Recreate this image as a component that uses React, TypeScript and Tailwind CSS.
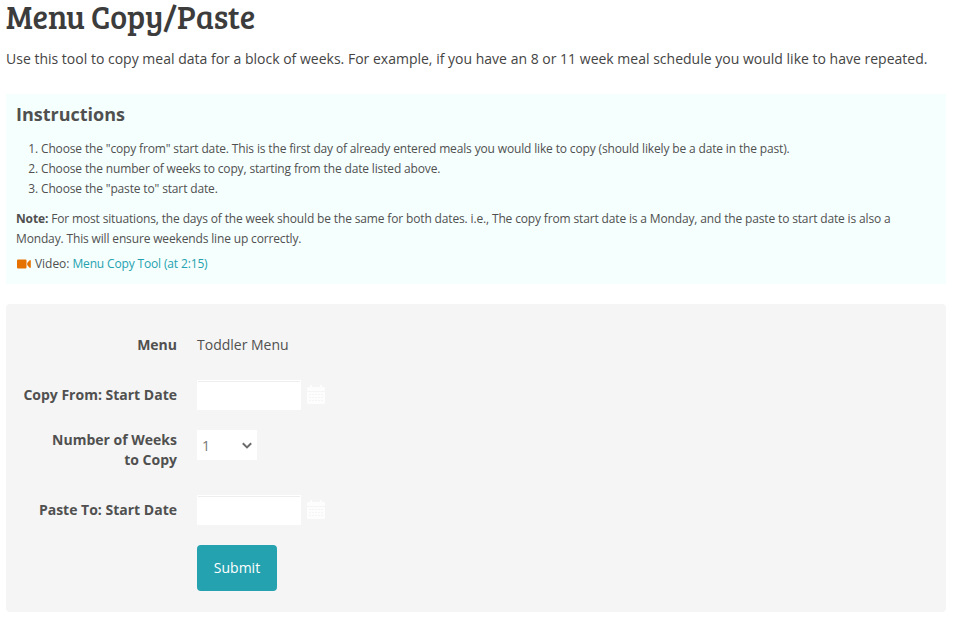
import { useState } from 'react'
import type { ReactNode } from 'react'

const steps = [
  'Choose the "copy from" start date. This is the first day of already entered meals you would like to copy (should likely be a date in the past).',
  'Choose the number of weeks to copy, starting from the date listed above.',
  'Choose the "paste to" start date.',
]

function VideoIcon() {
  return (
    <svg className="ml-px w-[14px] h-[10px] mr-1" viewBox="0 0 14 10" fill="#e57200">
      <rect x="0" y="0.5" width="9.5" height="9" rx="1" />
      <path d="M10.2 4 12.6 1.2h1.2v7.6h-1.2L10.2 6z" />
    </svg>
  )
}

function CalendarIcon() {
  return (
    <svg className="w-[18px] h-5" viewBox="0 0 18 20" fill="#fdfdfd">
      <path d="M0 3.2Q0 2 1.2 2H3V0h2v2h8V0h2v2h1.8Q18 2 18 3.2V6H0z" />
      <path
        fillRule="evenodd"
        d="M0 7h18v11q0 1-1 1H1q-1 0-1-1zM2 9v1h2V9zm3 0v1h2V9zm3 0v1h2V9zm3 0v1h2V9zm3 0v1h2V9zM2 12v1h2v-1zm3 0v1h2v-1zm3 0v1h2v-1zm3 0v1h2v-1zm3 0v1h2v-1zM2 15v1h2v-1zm3 0v1h2v-1zm3 0v1h2v-1zm3 0v1h2v-1zm3 0v1h2v-1z"
      />
    </svg>
  )
}

function Row({ label, className, children }: { label: ReactNode; className?: string; children: ReactNode }) {
  return (
    <div className={`flex gap-5 ${className ?? ''}`}>
      <div className="w-[171px] shrink-0 text-right font-bold">{label}</div>
      {children}
    </div>
  )
}

function DateField({ value, onChange }: { value: string; onChange: (v: string) => void }) {
  return (
    <div className="-mt-[5px] flex h-[30px] items-center gap-1.5">
      <input
        type="text"
        value={value}
        onChange={(e) => onChange(e.target.value)}
        className="w-[104px] h-[30px] px-1.5 bg-white border border-white shadow-[inset_0_1px_0_#eeeeee] outline-none"
      />
      <button type="button" aria-label="Pick a date" className="h-5">
        <CalendarIcon />
      </button>
    </div>
  )
}

export default function App() {
  const [from, setFrom] = useState('')
  const [weeks, setWeeks] = useState('1')
  const [to, setTo] = useState('')

  return (
    <div className="w-[955px] h-[620px] bg-white pl-1.5 pr-[9px] font-['Open_Sans',sans-serif] text-sm leading-5 text-[#505050]">
      <h1 className="h-[38px] whitespace-nowrap font-['Bree_Serif','DejaVu_Serif',serif] text-[32px] leading-[34px] tracking-[-0.1px] text-[#3c3c3c]">
        Menu Copy/Paste
      </h1>
      <p className="mt-[11px] whitespace-nowrap tracking-[0.007px] text-[#444444]">
        Use this tool to copy meal data for a block of weeks. For example, if you have an 8 or 11 week meal schedule you would like to have repeated.
      </p>

      {/* Instructions */}
      <section className="mt-[25px] h-[190px] bg-[#f5fffe] px-2.5 pt-2.5 text-xs leading-5 tracking-[-0.15px]">
        <h2 className="text-lg leading-5 font-bold tracking-normal">Instructions</h2>
        <ol className="mt-[15px] ml-[25px] list-decimal">
          {steps.map((step) => (
            <li key={step}>{step}</li>
          ))}
        </ol>
        <p className="mt-2.5">
          <strong>Note:</strong> For most situations, the days of the week should be the same for both dates. i.e., The copy from start date is a Monday, and the paste to start date is also a
          Monday. This will ensure weekends line up correctly.
        </p>
        <p className="mt-[5px] flex items-center">
          <VideoIcon />
          <span>
            <span className="tracking-[-0.05px]">Video: </span>
            <a href="#" className="text-[#24a2af]">Menu Copy Tool (at 2:15)</a>
          </span>
        </p>
      </section>

      {/* Copy form */}
      <form className="mt-5 h-[308px] rounded bg-[#f5f5f5] pt-[31px]" onSubmit={(e) => e.preventDefault()}>
        <Row label="Menu">
          <span>Toddler Menu</span>
        </Row>
        <Row label="Copy From: Start Date" className="mt-[30px] h-5">
          <DateField value={from} onChange={setFrom} />
        </Row>
        <Row label={<>Number of Weeks<br />to Copy</>} className="mt-[25px]">
          <div className="relative h-[30px]">
            <select
              value={weeks}
              onChange={(e) => setWeeks(e.target.value)}
              className="w-[60px] h-[30px] appearance-none bg-white pl-[5px] pt-px text-[#777777] outline-none"
            >
              {['1', '2', '3', '4', '5', '6', '7', '8'].map((n) => (
                <option key={n}>{n}</option>
              ))}
            </select>
            <svg className="pointer-events-none absolute right-[5px] top-3 w-2.5 h-2" viewBox="0 0 10 8" fill="none" stroke="#6b6b6b" strokeWidth="2">
              <path d="M0.8 1.2 5 5.4 9.2 1.2" />
            </svg>
          </div>
        </Row>
        <Row label="Paste To: Start Date" className="mt-[30px] h-5">
          <DateField value={to} onChange={setTo} />
        </Row>
        <button type="submit" className="mt-[25px] ml-[191px] block w-20 h-[46px] rounded bg-[#24a2af] text-white">
          Submit
        </button>
      </form>
    </div>
  )
}
